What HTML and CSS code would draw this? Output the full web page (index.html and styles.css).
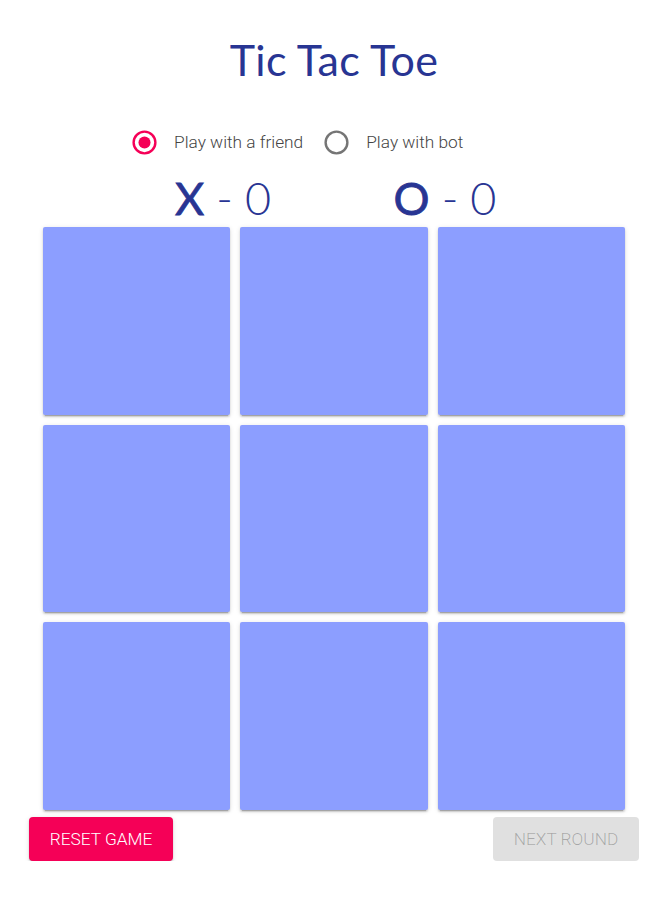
FILE: index.html
```html
<!DOCTYPE html>
<html lang="en">
<head>
<meta charset="utf-8">
<title>Tic Tac Toe</title>
<link rel="stylesheet" href="styles.css">
</head>
<body>
<div class="app">
  <h1 class="title">Tic Tac Toe</h1>
  <div class="modes">
    <label class="mode">
      <svg class="radio radio-on" viewBox="0 0 24 24" width="29" height="29"><circle cx="12" cy="12" r="9" fill="none" stroke="#f50057" stroke-width="2"/><circle cx="12" cy="12" r="5" fill="#f50057"/></svg>
      <span class="mode-label">Play with a friend</span>
    </label>
    <label class="mode">
      <svg class="radio" viewBox="0 0 24 24" width="29" height="29"><circle cx="12" cy="12" r="9" fill="none" stroke="#757575" stroke-width="2"/></svg>
      <span class="mode-label">Play with bot</span>
    </label>
  </div>
  <div class="scores">
    <div class="score"><span class="mark">X</span><span class="sep">-</span><span class="num">0</span></div>
    <div class="score"><span class="mark">O</span><span class="sep">-</span><span class="num">0</span></div>
  </div>
  <div class="board">
    <div class="cell"></div><div class="cell"></div><div class="cell"></div>
    <div class="cell"></div><div class="cell"></div><div class="cell"></div>
    <div class="cell"></div><div class="cell"></div><div class="cell"></div>
  </div>
  <div class="actions">
    <button class="btn btn-reset">RESET GAME</button>
    <button class="btn btn-next" disabled>NEXT ROUND</button>
  </div>
</div>
</body>
</html>
```
FILE: styles.css
```css
* { box-sizing: border-box; }
html, body { margin: 0; padding: 0; background: #fff; }
body { font-family: Roboto, "Liberation Sans", sans-serif; }
.app { width: 668px; padding-top: 34px; }
.title {
  margin: 0;
  text-align: center;
  font-family: Lato, "Noto Sans", sans-serif;
  font-weight: 400;
  font-size: 43px;
  line-height: 52px;
  color: #283593;
  letter-spacing: 0.3px;
}
.modes {
  display: flex;
  align-items: center;
  padding-left: 130px;
  margin-top: 42px;
  height: 28px;
}
.mode { display: flex; align-items: center; margin-right: 19px; cursor: pointer; }
.radio { display: block; }
.mode-label {
  margin-left: 15px;
  font-size: 17.3px;
  font-weight: 300;
  color: #444;
}
.scores {
  display: grid;
  grid-template-columns: 222px 222px;
  justify-content: center;
  margin-top: 17px;
  height: 54px;
  align-items: start;
}
.score {
  text-align: center;
  font-family: Lato, "Noto Sans", sans-serif;
  font-size: 45px;
  line-height: 50px;
  color: #283593;
  font-weight: 300;
}
.mark { font-weight: 400; -webkit-text-stroke: 0.8px #283593; }
.sep { margin: 0 12px; }
.board {
  width: 582px;
  margin: 0 auto;
  display: grid;
  grid-template-columns: repeat(3, 1fr);
  gap: 10px;
}
.cell {
  height: 187.7px;
  background: #8c9eff;
  border-radius: 2px;
  box-shadow: 0 3px 1px -2px rgba(0,0,0,.2), 0 2px 2px 0 rgba(0,0,0,.14), 0 1px 5px 0 rgba(0,0,0,.12);
}
.actions {
  width: 610px;
  margin: 7px auto 0;
  display: flex;
  justify-content: space-between;
}
.btn {
  height: 44px;
  border: none;
  border-radius: 4px;
  font-family: Roboto, "Liberation Sans", sans-serif;
  font-size: 17.3px;
  font-weight: 300;
  padding: 0 18px;
}
.btn-reset {
  width: 144px;
  background: #f50057;
  color: #fff;
  box-shadow: 0 3px 1px -2px rgba(0,0,0,.2), 0 2px 2px 0 rgba(0,0,0,.14), 0 1px 5px 0 rgba(0,0,0,.12);
}
.btn-next {
  width: 146px;
  background: #e0e0e0;
  color: rgba(0,0,0,.26);
}
```
